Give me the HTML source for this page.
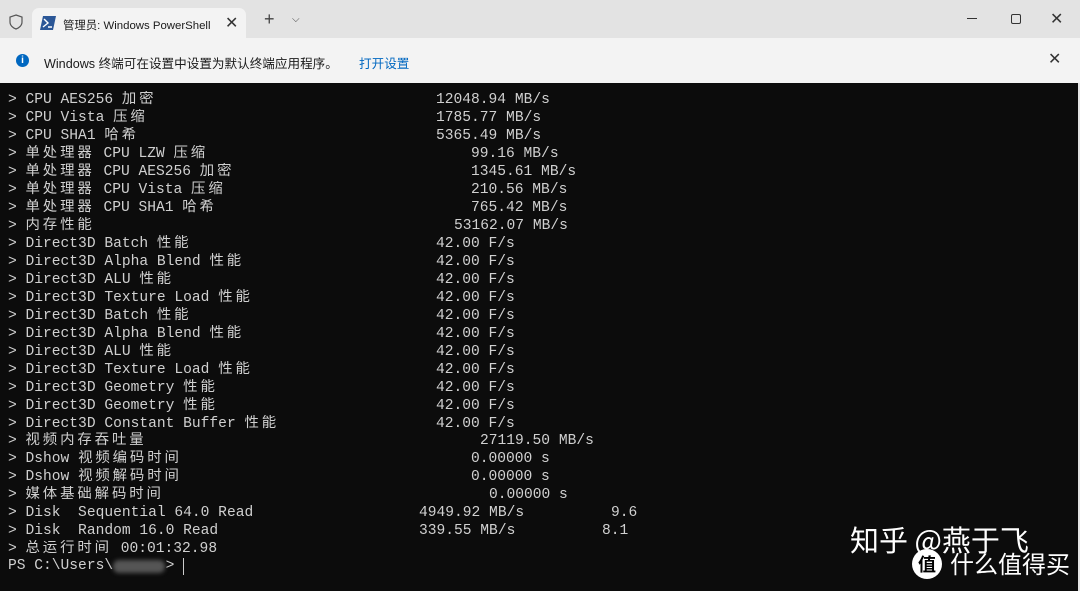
<!DOCTYPE html>
<html><head><meta charset="utf-8"><style>
*{margin:0;padding:0;box-sizing:border-box}
body{width:1080px;height:591px;overflow:hidden;background:#e5e5e5;font-family:"Liberation Sans","Noto Sans CJK SC",sans-serif;position:relative}
.title{position:absolute;left:0;top:0;width:1080px;height:38px;background:#e3e3e3}
.tab{position:absolute;left:32px;top:8px;width:214px;height:32px;background:#f3f3f3;border-radius:7px 7px 0 0;font-size:11.4px;color:#1a1a1a}
.info{position:absolute;left:0;top:38px;width:1080px;height:45px;background:#f3f3f3;font-size:12.6px;color:#1a1a1a}
.term{position:absolute;left:0;top:83px;width:1078px;height:508px;background:#0c0c0c}
.l{position:absolute;left:8px;height:18px;font-family:"Liberation Mono","Noto Sans CJK SC",monospace;font-size:14.6px;color:#d0d0d0;white-space:pre;line-height:18px;overflow:hidden}
.c{font-family:"Noto Sans CJK SC",sans-serif;letter-spacing:2.9px;display:inline-block;line-height:18px;height:18px;vertical-align:top;font-size:14.4px;position:relative;top:-2px}
.v{position:absolute;font-family:"Liberation Mono",monospace;font-size:14.6px;color:#d0d0d0;white-space:pre;line-height:18px}
</style></head><body>
<div class="title">
<svg style="position:absolute;left:9px;top:14px" width="14" height="16" viewBox="0 0 14 16"><path d="M7 1 L13 3 V8 C13 11.5 10 14 7 15 C4 14 1 11.5 1 8 V3 Z" fill="none" stroke="#555" stroke-width="1.2"/></svg>
<div class="tab">
<svg style="position:absolute;left:8px;top:8px" width="16" height="14" viewBox="0 0 16 14"><path d="M3 0 H16 L13 14 H0 Z" fill="#2b5797"/><path d="M4 3 L8 7 L3 11 M8 11 H12" stroke="#fff" stroke-width="1.4" fill="none"/></svg>
<span style="position:absolute;left:31px;top:9px">管理员: Windows PowerShell</span>
<span style="position:absolute;left:193px;top:5px;font-size:16px;color:#333">✕</span>
</div>
<span style="position:absolute;left:264px;top:9px;font-size:18px;color:#444">+</span>
<span style="position:absolute;left:292px;top:14px;font-size:10px;color:#444">⌵</span>
<div style="position:absolute;left:967px;top:18px;width:10px;height:1px;background:#333"></div>
<div style="position:absolute;left:1011px;top:14px;width:10px;height:10px;border:1px solid #333;border-radius:2px"></div>
<span style="position:absolute;left:1050px;top:9px;font-size:16px;color:#333">✕</span>
</div>
<div class="info">
<div style="position:absolute;left:16px;top:16px;width:13px;height:13px;border-radius:50%;background:#0067c0;color:#fff;font-size:10px;text-align:center;line-height:13px;font-weight:bold">i</div>
<span style="position:absolute;left:44px;top:15px">Windows 终端可在设置中设置为默认终端应用程序。</span>
<span style="position:absolute;left:359px;top:15px;color:#0067c0">打开设置</span>
<span style="position:absolute;left:1048px;top:11px;font-size:16px;color:#333">✕</span>
</div>
<div class="term"></div>
<div class="l" style="top:91px">&gt; CPU AES256 <span class="c">加密</span></div><div class="v" style="left:436px;top:91px">12048.94 MB/s</div>
<div class="l" style="top:109px">&gt; CPU Vista <span class="c">压缩</span></div><div class="v" style="left:436px;top:109px">1785.77 MB/s</div>
<div class="l" style="top:127px">&gt; CPU SHA1 <span class="c">哈希</span></div><div class="v" style="left:436px;top:127px">5365.49 MB/s</div>
<div class="l" style="top:145px">&gt; <span class="c">单处理器</span> CPU LZW <span class="c">压缩</span></div><div class="v" style="left:471px;top:145px">99.16 MB/s</div>
<div class="l" style="top:163px">&gt; <span class="c">单处理器</span> CPU AES256 <span class="c">加密</span></div><div class="v" style="left:471px;top:163px">1345.61 MB/s</div>
<div class="l" style="top:181px">&gt; <span class="c">单处理器</span> CPU Vista <span class="c">压缩</span></div><div class="v" style="left:471px;top:181px">210.56 MB/s</div>
<div class="l" style="top:199px">&gt; <span class="c">单处理器</span> CPU SHA1 <span class="c">哈希</span></div><div class="v" style="left:471px;top:199px">765.42 MB/s</div>
<div class="l" style="top:217px">&gt; <span class="c">内存性能</span></div><div class="v" style="left:454px;top:217px">53162.07 MB/s</div>
<div class="l" style="top:235px">&gt; Direct3D Batch <span class="c">性能</span></div><div class="v" style="left:436px;top:235px">42.00 F/s</div>
<div class="l" style="top:253px">&gt; Direct3D Alpha Blend <span class="c">性能</span></div><div class="v" style="left:436px;top:253px">42.00 F/s</div>
<div class="l" style="top:271px">&gt; Direct3D ALU <span class="c">性能</span></div><div class="v" style="left:436px;top:271px">42.00 F/s</div>
<div class="l" style="top:289px">&gt; Direct3D Texture Load <span class="c">性能</span></div><div class="v" style="left:436px;top:289px">42.00 F/s</div>
<div class="l" style="top:307px">&gt; Direct3D Batch <span class="c">性能</span></div><div class="v" style="left:436px;top:307px">42.00 F/s</div>
<div class="l" style="top:325px">&gt; Direct3D Alpha Blend <span class="c">性能</span></div><div class="v" style="left:436px;top:325px">42.00 F/s</div>
<div class="l" style="top:343px">&gt; Direct3D ALU <span class="c">性能</span></div><div class="v" style="left:436px;top:343px">42.00 F/s</div>
<div class="l" style="top:361px">&gt; Direct3D Texture Load <span class="c">性能</span></div><div class="v" style="left:436px;top:361px">42.00 F/s</div>
<div class="l" style="top:379px">&gt; Direct3D Geometry <span class="c">性能</span></div><div class="v" style="left:436px;top:379px">42.00 F/s</div>
<div class="l" style="top:397px">&gt; Direct3D Geometry <span class="c">性能</span></div><div class="v" style="left:436px;top:397px">42.00 F/s</div>
<div class="l" style="top:415px">&gt; Direct3D Constant Buffer <span class="c">性能</span></div><div class="v" style="left:436px;top:415px">42.00 F/s</div>
<div class="l" style="top:432px">&gt; <span class="c">视频内存吞吐量</span></div><div class="v" style="left:480px;top:432px">27119.50 MB/s</div>
<div class="l" style="top:450px">&gt; Dshow <span class="c">视频编码时间</span></div><div class="v" style="left:471px;top:450px">0.00000 s</div>
<div class="l" style="top:468px">&gt; Dshow <span class="c">视频解码时间</span></div><div class="v" style="left:471px;top:468px">0.00000 s</div>
<div class="l" style="top:486px">&gt; <span class="c">媒体基础解码时间</span></div><div class="v" style="left:489px;top:486px">0.00000 s</div>
<div class="l" style="top:504px">&gt; Disk  Sequential 64.0 Read</div><div class="v" style="left:419px;top:504px">4949.92 MB/s</div><div class="v" style="left:611px;top:504px">9.6</div>
<div class="l" style="top:522px">&gt; Disk  Random 16.0 Read</div><div class="v" style="left:419px;top:522px">339.55 MB/s</div><div class="v" style="left:602px;top:522px">8.1</div>
<div class="l" style="top:540px">&gt; <span class="c">总运行时间</span> 00:01:32.98</div>
<div class="l" style="top:557px">PS C:\Users\      &gt; </div>
<div style="position:absolute;left:113px;top:560px;width:52px;height:13px;background:#555;border-radius:6px;filter:blur(2px)"></div>
<div style="position:absolute;left:183px;top:558px;width:1px;height:17px;background:#ccc"></div>
<div style="position:absolute;left:850px;top:522px;font-size:29px;color:#fff;font-family:'Noto Sans CJK SC',sans-serif;line-height:34px">知乎 @燕于飞</div>
<div style="position:absolute;left:912px;top:549px;width:30px;height:30px;border-radius:50%;background:#fff;color:#000;font-size:18px;text-align:center;line-height:30px;font-family:'Noto Sans CJK SC',sans-serif;font-weight:bold">值</div>
<div style="position:absolute;left:950px;top:548px;font-size:24px;color:#fff;font-family:'Noto Sans CJK SC',sans-serif;line-height:30px">什么值得买</div>
</body></html>
